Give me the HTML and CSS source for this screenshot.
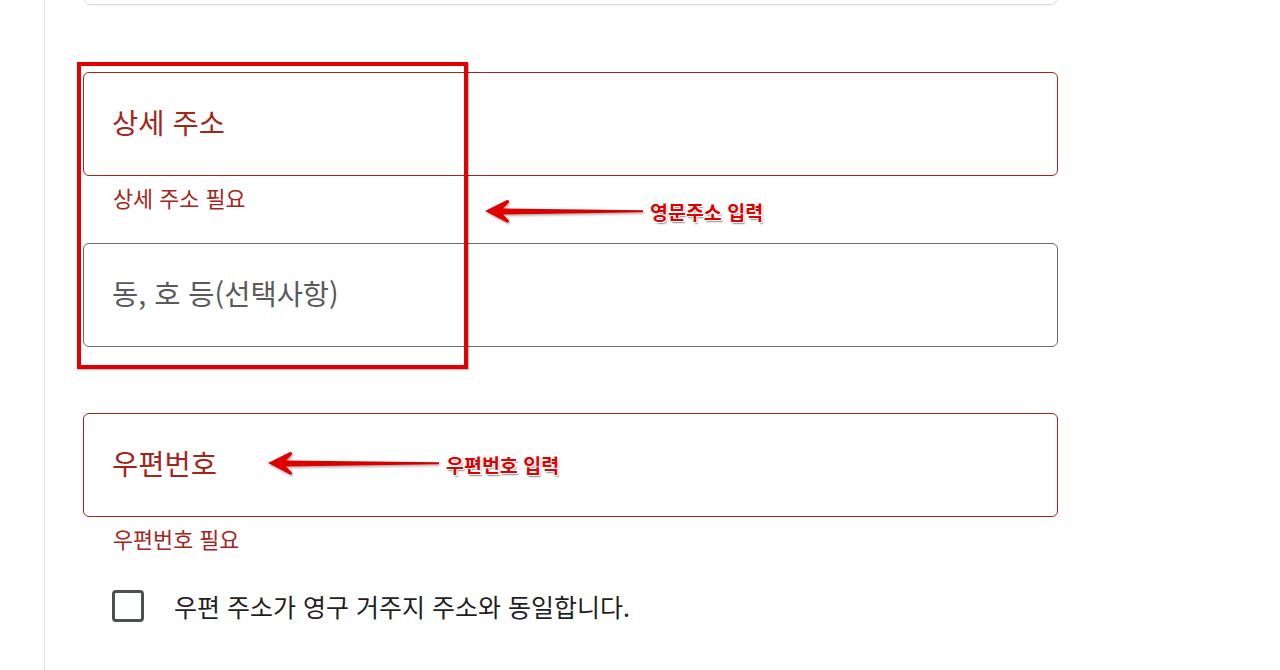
FILE: index.html
```html
<!DOCTYPE html>
<html lang="ko">
<head>
<meta charset="utf-8">
<link rel="stylesheet" href="styles.css">
</head>
<body>
<div class="page">
  <div class="column">
    <div class="prev-card"></div>

    <div class="field error first">
      <span class="label">상세 주소</span>
    </div>
    <div class="helper">상세 주소 필요</div>

    <div class="field plain">
      <span class="placeholder">동, 호 등(선택사항)</span>
    </div>

    <div class="field error zip">
      <span class="label">우편번호</span>
    </div>
    <div class="helper">우편번호 필요</div>

    <label class="check-row">
      <span class="checkbox"></span>
      <span class="check-text">우편 주소가 영구 거주지 주소와 동일합니다.</span>
    </label>
  </div>

  <div class="annot-box"></div>

  <svg class="arrow arrow-1" width="170" height="30" viewBox="0 0 170 30">
    <defs>
      <linearGradient id="g1" x1="0" x2="1" y1="0" y2="0">
        <stop offset="0" stop-color="#e00000"/>
        <stop offset="1" stop-color="#d00000"/>
      </linearGradient>
      <filter id="sh" x="-10%" y="-50%" width="120%" height="200%">
        <feDropShadow dx="1" dy="1.5" stdDeviation="0.8" flood-color="#000" flood-opacity="0.35"/>
      </filter>
    </defs>
    <path d="M2 14 L24 3 Q27 3 25.5 6 L20 11.5 L160 13.2 L160 15.2 L20 17.5 L25.5 23 Q27 26 24 25.5 Z" fill="url(#g1)" filter="url(#sh)"/>
  </svg>
  <span class="annot-text text-1">영문주소 입력</span>

  <svg class="arrow arrow-2" width="180" height="30" viewBox="0 0 180 30">
    <path d="M2 14 L24 3 Q27 3 25.5 6 L20 11.5 L173 13.2 L173 15.2 L20 17.5 L25.5 23 Q27 26 24 25.5 Z" fill="url(#g1)" filter="url(#sh)"/>
  </svg>
  <span class="annot-text text-2">우편번호 입력</span>
</div>
</body>
</html>
```

FILE: styles.css
```css
html, body {
  margin: 0;
  padding: 0;
  background: #ffffff;
}

body {
  font-family: "Noto Sans CJK KR", "Noto Sans", Roboto, sans-serif;
  height: 670px;
  overflow: hidden;
}

.page {
  position: relative;
  height: 670px;
}

.column {
  margin-left: 44px;
  border-left: 1px solid #e2e2e2;
  padding-left: 38px;
  height: 670px;
  box-sizing: border-box;
  display: flex;
  flex-direction: column;
  align-items: flex-start;
}

.prev-card {
  width: 973px;
  height: 40px;
  margin-top: -35px;
  margin-left: 1px;
  border: 1px solid #dcdcdc;
  border-radius: 6px;
  box-sizing: border-box;
  box-shadow: 0 1px 1px rgba(0,0,0,0.04);
}

.field {
  width: 975px;
  height: 104px;
  box-sizing: border-box;
  border-radius: 6px;
  display: flex;
  align-items: center;
  padding-left: 28px;
  padding-bottom: 4px;
  font-size: 28.5px;
  line-height: 40px;
}

.field.error {
  border: 1.5px solid #a3261b;
}

.field.first {
  margin-top: 67px;
}

.field.plain {
  border: 1.5px solid #6a6a6a;
  margin-top: 31px;
}

.field.zip {
  margin-top: 66px;
}

.label {
  color: #a3261b;
}

.placeholder {
  color: #5a5a5a;
}

.helper {
  color: #a3261b;
  font-size: 21.8px;
  margin-top: 8px;
  padding-left: 30px;
  line-height: 28px;
}

.check-row {
  display: flex;
  align-items: center;
  height: 32px;
  margin-top: 37px;
  padding-left: 29px;
}

.checkbox {
  width: 32px;
  height: 32px;
  box-sizing: border-box;
  border: 3px solid #4c5054;
  border-radius: 4px;
}

.check-text {
  margin-left: 30px;
  font-size: 25px;
  line-height: 32px;
  color: #1f1f1f;
}

.annot-box {
  position: absolute;
  left: 77px;
  top: 62px;
  width: 391px;
  height: 307px;
  box-sizing: border-box;
  border: 4px solid #e20000;
  box-shadow: 1px 1px 1px rgba(0,0,0,0.25);
}

.arrow {
  position: absolute;
}

.arrow-1 {
  left: 483px;
  top: 197px;
}

.arrow-2 {
  left: 266px;
  top: 449px;
}

.annot-text {
  position: absolute;
  font-size: 19.5px;
  font-weight: 700;
  color: #e00000;
  text-shadow:
    -1px 0 0 #fff, 1px 0 0 #fff, 0 -1px 0 #fff, 0 1px 0 #fff,
    -1px -1px 0 #fff, 1px 1px 0 #fff, -1px 1px 0 #fff, 1px -1px 0 #fff,
    1.5px 2px 1.5px rgba(0,0,0,0.45);
  line-height: 22px;
}

.text-1 {
  left: 650px;
  top: 201px;
}

.text-2 {
  left: 446px;
  top: 454px;
}
```
